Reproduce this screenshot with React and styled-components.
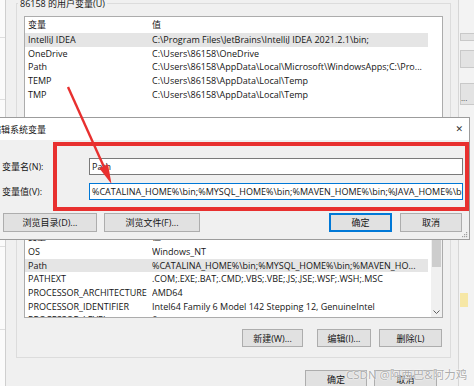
import React from "react";
import styled, { createGlobalStyle } from "styled-components";

const FONT = `"Open Sans", "Noto Sans CJK SC", sans-serif`;

const userVars = [
  ["IntelliJ IDEA", "C:\\Program Files\\JetBrains\\IntelliJ IDEA 2021.2.1\\bin;", true],
  ["OneDrive", "C:\\Users\\86158\\OneDrive"],
  ["Path", "C:\\Users\\86158\\AppData\\Local\\Microsoft\\WindowsApps;C:\\Pro..."],
  ["TEMP", "C:\\Users\\86158\\AppData\\Local\\Temp"],
  ["TMP", "C:\\Users\\86158\\AppData\\Local\\Temp"],
];

const systemVars = [
  ["OS", "Windows_NT"],
  ["Path", "%CATALINA_HOME%\\bin;%MYSQL_HOME%\\bin;%MAVEN_HO...", true],
  ["PATHEXT", ".COM;.EXE;.BAT;.CMD;.VBS;.VBE;.JS;.JSE;.WSF;.WSH;.MSC"],
  ["PROCESSOR_ARCHITECTURE", "AMD64"],
  ["PROCESSOR_IDENTIFIER", "Intel64 Family 6 Model 142 Stepping 12, GenuineIntel"],
  ["PROCESSOR_LEVEL", "6"],
];

const App = () => (
  <>
    <GlobalStyle />
    <Screen>
      <LeftStrip>
        <StripPart $h={38} />
        <StripPart $h={62} />
        <StripPart $h={147} />
        <StripPart $h={83} />
      </LeftStrip>

      <EnvWindow>
        <Group $mt={-3} $pt={6} $pb={8}>
          <Legend>86158 的用户变量(U)</Legend>
          <ListBox $h={154}>
            <Rows>
              <Header>
                <NameCell>变量</NameCell>
                <ValueCell>值</ValueCell>
              </Header>
              {userVars.map(([name, value, sel]) => (
                <Row key={name} $selected={sel}>
                  <NameCell>{name}</NameCell>
                  <ValueCell>{value}</ValueCell>
                </Row>
              ))}
            </Rows>
          </ListBox>
          <ButtonRow $mt={8}>
            <Button $w={61}>新建(N)...</Button>
            <Button $w={54} $ml={14}>编辑(E)...</Button>
            <Button $w={63} $ml={8}>删除(D)</Button>
          </ButtonRow>
        </Group>

        <Group $mt={2} $pt={7} $pb={10}>
          <Legend>系统变量(S)</Legend>
          <ListBox $h={90}>
            <Rows>
              <Header>
                <NameCell>变量</NameCell>
                <ValueCell>值</ValueCell>
              </Header>
              {systemVars.map(([name, value, sel]) => (
                <Row key={name} $selected={sel}>
                  <NameCell>{name}</NameCell>
                  <ValueCell>{value}</ValueCell>
                </Row>
              ))}
            </Rows>
            <ScrollBar>
              <ScrollArrow>
                <svg width="7" height="4" viewBox="0 0 7 4">
                  <path d="M0.5 3.5 L3.5 0.5 L6.5 3.5" fill="none" stroke="#606060" strokeWidth="1" />
                </svg>
              </ScrollArrow>
              <Thumb />
              <ScrollArrow>
                <svg width="7" height="4" viewBox="0 0 7 4">
                  <path d="M0.5 0.5 L3.5 3.5 L6.5 0.5" fill="none" stroke="#606060" strokeWidth="1" />
                </svg>
              </ScrollArrow>
            </ScrollBar>
          </ListBox>
          <ButtonRow $mt={11}>
            <Button $w={61} $h={18}>新建(W)...</Button>
            <Button $w={54} $h={18} $ml={14}>编辑(I)...</Button>
            <Button $w={63} $h={18} $ml={8}>删除(L)</Button>
          </ButtonRow>
        </Group>

        <FooterRow>
          <Button $w={62}>确定</Button>
          <Button $w={63} $ml={7}>取消</Button>
        </FooterRow>
      </EnvWindow>

      <RightStrip>
        <SideBox $mt={33} $h={8} />
        <SideBox $mt={9} $h={18} />
        <SideBox $mt={15} $h={22}>...</SideBox>
        <SideNote $mt={188} />
      </RightStrip>

      <Dialog>
        <TitleBar>
          <Title>编辑系统变量</Title>
          <CloseGlyph>✕</CloseGlyph>
        </TitleBar>
        <DialogBody>
          <Fields>
            <FieldLabel>变量名(N):</FieldLabel>
            <TextBox>Path</TextBox>
            <FieldLabel>变量值(V):</FieldLabel>
            <TextBox $focused>%CATALINA_HOME%\bin;%MYSQL_HOME%\bin;%MAVEN_HOME%\bin;%JAVA_HOME%\bin;%TOMCAT_HOME%\bin</TextBox>
          </Fields>
          <DialogButtons>
            <ButtonGroup>
              <Button $w={94}>浏览目录(D)...</Button>
              <Button $w={96} $ml={7}>浏览文件(F)...</Button>
            </ButtonGroup>
            <ButtonGroup>
              <Button $w={63} $primary>确定</Button>
              <Button $w={62} $ml={8}>取消</Button>
            </ButtonGroup>
          </DialogButtons>
          <GripRow>
            <svg width="6" height="6" viewBox="0 0 6 6">
              <rect x="4" y="0" width="1.2" height="1.2" fill="#a0a0a0" />
              <rect x="2" y="2" width="1.2" height="1.2" fill="#a0a0a0" />
              <rect x="4" y="2" width="1.2" height="1.2" fill="#a0a0a0" />
              <rect x="0" y="4" width="1.2" height="1.2" fill="#a0a0a0" />
              <rect x="2" y="4" width="1.2" height="1.2" fill="#a0a0a0" />
              <rect x="4" y="4" width="1.2" height="1.2" fill="#a0a0a0" />
            </svg>
          </GripRow>
        </DialogBody>
      </Dialog>

      <RedFrame />

      <Arrow width="474" height="386" viewBox="0 0 474 386">
        <line x1="68" y1="87" x2="104.2" y2="167.5" stroke="#e8302f" strokeWidth="2.4" />
        <polygon points="111.5,184 99.3,168.2 108,164.3" fill="#e8302f" />
      </Arrow>

      <Watermark>CSDN @阿西巴&amp;阿力鸡</Watermark>
    </Screen>
  </>
);

export default App;

const GlobalStyle = createGlobalStyle`
  html, body {
    margin: 0;
    padding: 0;
  }
  body {
    width: 474px;
    height: 386px;
    overflow: hidden;
    background: #f0f0f0;
    font-family: ${FONT};
    font-size: 9px;
    color: #151515;
  }
`;

const Screen = styled.div`
  position: relative;
  display: flex;
  width: 474px;
  height: 386px;
  overflow: hidden;
  background: #f0f0f0;
`;

const LeftStrip = styled.div`
  flex: none;
  width: 5px;
  background: #fbfbfb;
  border-right: 1px solid #cfcfcf;
  display: flex;
  flex-direction: column;
`;

const StripPart = styled.div`
  height: ${({ $h }) => $h}px;
  box-sizing: border-box;
  border-bottom: 1px solid #dedede;
`;

const EnvWindow = styled.div`
  flex: none;
  width: 453px;
  box-sizing: border-box;
  padding-left: 10px;
  background: #f0f0f0;
  border-right: 1px solid #d6d6d6;
  display: flex;
  flex-direction: column;
`;

const Group = styled.fieldset`
  margin: ${({ $mt }) => $mt}px 0 0 0;
  width: 435px;
  min-width: 0;
  box-sizing: border-box;
  border: 1px solid #dcdcdc;
  padding: ${({ $pt }) => $pt}px 7px ${({ $pb }) => $pb}px 7px;
  display: flex;
  flex-direction: column;
`;

const Legend = styled.legend`
  margin-left: -6px;
  padding: 0 2px;
  font-size: 9px;
  line-height: 13px;
  color: #151515;
`;

const ListBox = styled.div`
  flex: none;
  height: ${({ $h }) => $h}px;
  box-sizing: border-box;
  background: #fff;
  border: 1px solid #acacac;
  overflow: hidden;
  display: flex;
`;

const Rows = styled.div`
  flex: 1;
  min-width: 0;
`;

const Header = styled.div`
  display: flex;
  width: 403px;
  height: 16px;
  line-height: 16px;
  white-space: nowrap;
`;

const Row = styled.div`
  display: flex;
  width: 403px;
  height: 13.7px;
  line-height: 13.7px;
  white-space: nowrap;
  background: ${({ $selected }) => ($selected ? "#e5e5e5" : "transparent")};
`;

const NameCell = styled.span`
  flex: none;
  width: 127px;
  padding-left: 3px;
  box-sizing: border-box;
  overflow: hidden;
`;

const ValueCell = styled.span`
  flex: 1;
  overflow: hidden;
`;

const ScrollBar = styled.div`
  flex: none;
  width: 11px;
  background: #f0f0f0;
  display: flex;
  flex-direction: column;
`;

const ScrollArrow = styled.div`
  height: 11px;
  display: flex;
  align-items: center;
  justify-content: center;
`;

const Thumb = styled.div`
  height: 27px;
  margin: 0 1px auto 1px;
  background: #cdcdcd;
`;

const ButtonRow = styled.div`
  display: flex;
  justify-content: flex-end;
  margin-top: ${({ $mt }) => $mt}px;
  padding-right: 1px;
`;

const Button = styled.div`
  flex: none;
  width: ${({ $w }) => $w}px;
  height: ${({ $h }) => $h || 19}px;
  margin-left: ${({ $ml }) => $ml || 0}px;
  box-sizing: border-box;
  display: flex;
  align-items: center;
  justify-content: center;
  background: #e1e1e1;
  border: 1px solid ${({ $primary }) => ($primary ? "#0078d7" : "#adadad")};
  box-shadow: ${({ $primary }) => ($primary ? "inset 0 0 0 1px #0078d7" : "none")};
  font-size: 9px;
  color: #151515;
  white-space: nowrap;
`;

const FooterRow = styled.div`
  display: flex;
  justify-content: flex-end;
  margin-top: 12px;
  padding-right: 21px;
`;

const RightStrip = styled.div`
  flex: 1;
  background: #f3f3f3;
  display: flex;
  flex-direction: column;
`;

const SideBox = styled.div`
  margin-top: ${({ $mt }) => $mt}px;
  height: ${({ $h }) => $h}px;
  box-sizing: border-box;
  background: #e3e3e3;
  border: 1px solid #c9c9c9;
  border-right: none;
  margin-left: 1px;
  font-size: 8px;
  line-height: 28px;
  color: #444;
  overflow: hidden;
`;

const SideNote = styled.div`
  margin-top: ${({ $mt }) => $mt}px;
  width: 8px;
  height: 14px;
  margin-left: 1px;
  background: #f6e7a6;
`;

const Dialog = styled.div`
  position: absolute;
  left: -14px;
  top: 117px;
  width: 484px;
  height: 123px;
  box-sizing: border-box;
  border: 1px solid #9c9c9c;
  background: #f0f0f0;
  display: flex;
  flex-direction: column;
`;

const TitleBar = styled.div`
  flex: none;
  height: 22px;
  background: #fff;
  display: flex;
  align-items: center;
  justify-content: space-between;
  padding: 0 6px 0 5px;
`;

const Title = styled.span`
  font-size: 9px;
  color: #151515;
`;

const CloseGlyph = styled.span`
  font-family: "DejaVu Sans", sans-serif;
  font-size: 9px;
  color: #333;
`;

const DialogBody = styled.div`
  flex: 1;
  display: flex;
  flex-direction: column;
  padding: 18px 6px 0 15px;
`;

const Fields = styled.div`
  display: grid;
  grid-template-columns: 87px 1fr;
  row-gap: 8px;
  align-items: center;
`;

const FieldLabel = styled.span`
  font-size: 9px;
  white-space: nowrap;
`;

const TextBox = styled.div`
  height: 17px;
  box-sizing: border-box;
  background: #fff;
  border: 1px solid ${({ $focused }) => ($focused ? "#0078d7" : "#7a7a7a")};
  padding: 0 2px;
  line-height: 15px;
  white-space: nowrap;
  overflow: hidden;
`;

const DialogButtons = styled.div`
  display: flex;
  justify-content: space-between;
  margin-top: 13px;
  padding: 0 1px 0 1px;
`;

const ButtonGroup = styled.div`
  display: flex;
`;

const GripRow = styled.div`
  margin-top: auto;
  display: flex;
  justify-content: flex-end;
  margin-right: -5px;
  padding-bottom: 1px;
`;

const RedFrame = styled.div`
  position: absolute;
  left: 53px;
  top: 142px;
  width: 416px;
  height: 69px;
  box-sizing: border-box;
  border: 4px solid #e8302f;
`;

const Arrow = styled.svg`
  position: absolute;
  left: 0;
  top: 0;
  pointer-events: none;
`;

const Watermark = styled.div`
  position: absolute;
  left: 346px;
  top: 366px;
  font-size: 11.5px;
  color: rgba(150, 150, 150, 0.8);
  text-shadow: 0 0 1px #fff, 0 0 2px #fff;
  white-space: nowrap;
`;
